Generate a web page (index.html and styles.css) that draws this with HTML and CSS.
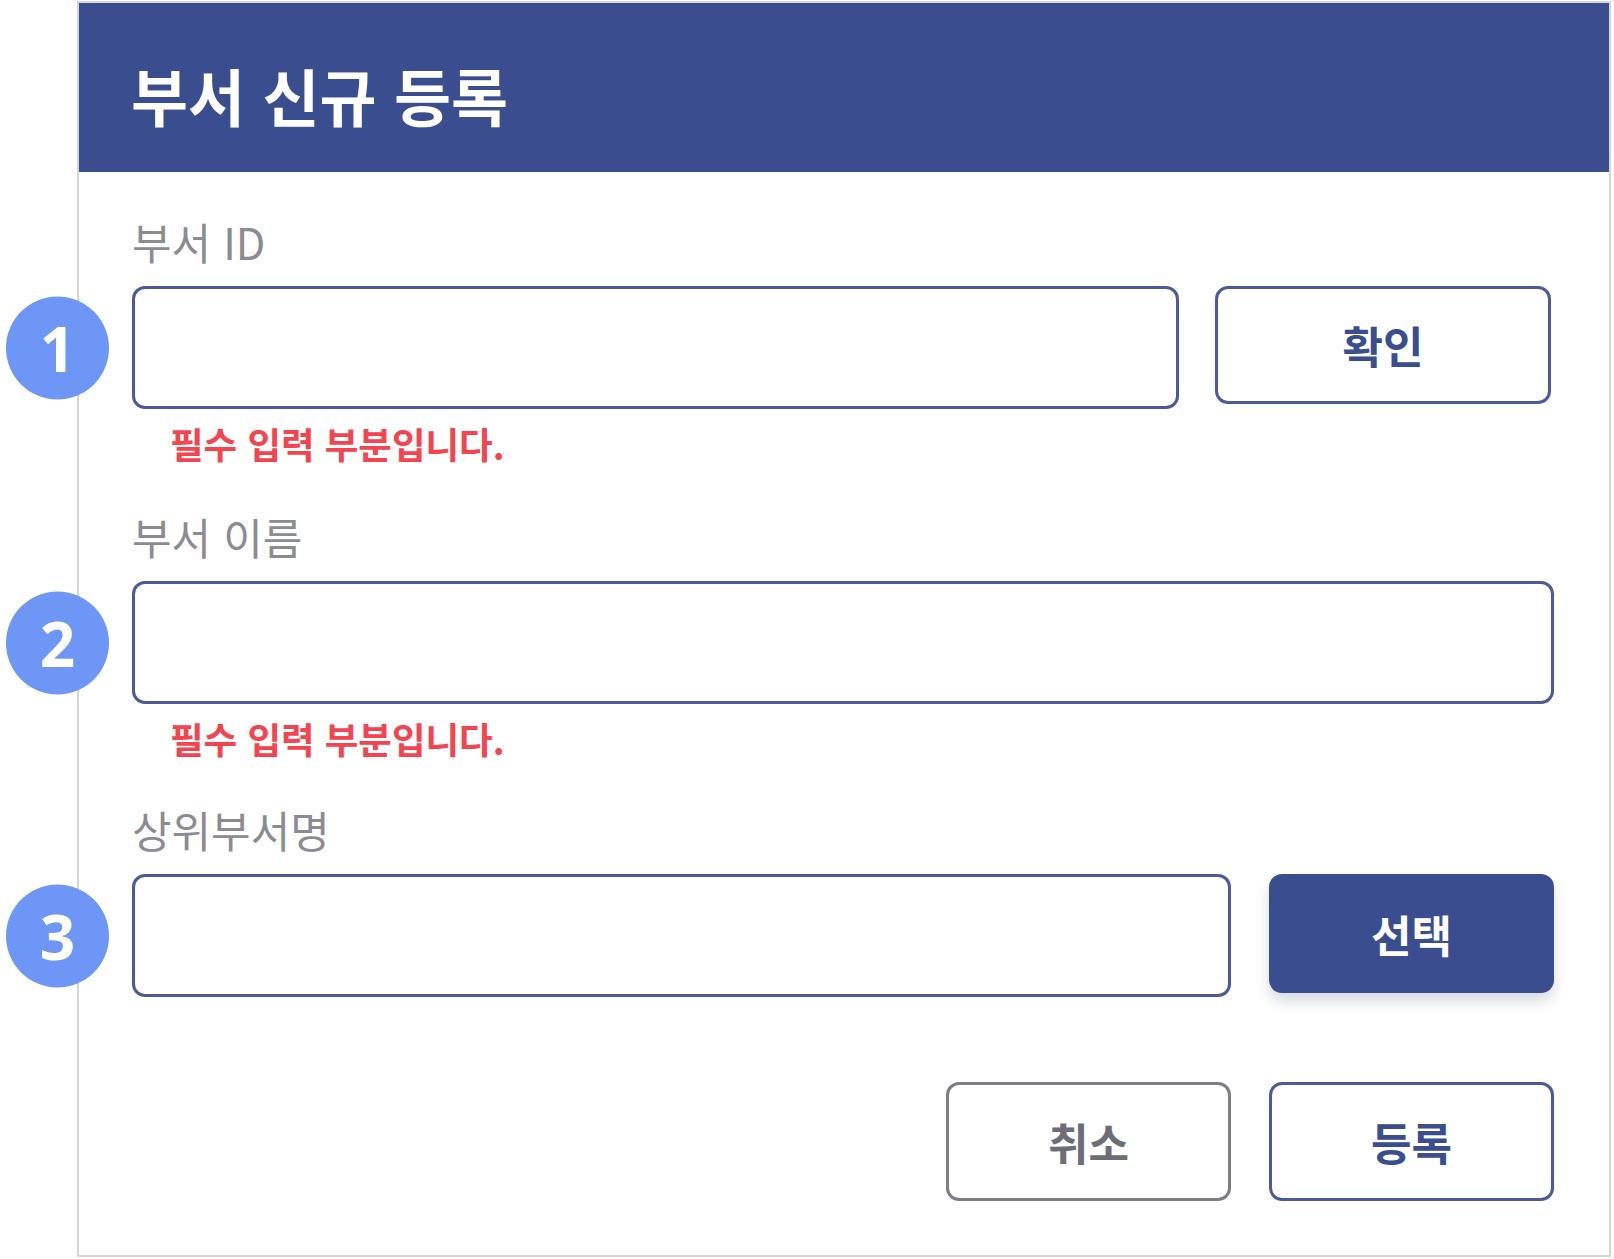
FILE: index.html
```html
<!DOCTYPE html>
<html lang="ko">
<head>
<meta charset="utf-8">
<title>부서 신규 등록</title>
<link rel="stylesheet" href="styles.css">
</head>
<body>
<div class="dialog">
  <div class="dialog-header">
    <h1 class="dialog-title">부서 신규 등록</h1>
  </div>
  <div class="dialog-body">
    <div class="field">
      <div class="field-label">부서 ID</div>
      <div class="field-row row-id">
        <span class="step">1</span>
        <div class="input"></div>
        <button class="btn btn-outline">확인</button>
      </div>
      <div class="field-error">필수 입력 부분입니다.</div>
    </div>
    <div class="field">
      <div class="field-label">부서 이름</div>
      <div class="field-row row-full">
        <span class="step">2</span>
        <div class="input"></div>
      </div>
      <div class="field-error">필수 입력 부분입니다.</div>
    </div>
    <div class="field field-last">
      <div class="field-label">상위부서명</div>
      <div class="field-row row-select">
        <span class="step">3</span>
        <div class="input"></div>
        <button class="btn btn-primary">선택</button>
      </div>
    </div>
    <div class="actions">
      <button class="btn btn-cancel">취소</button>
      <button class="btn btn-outline">등록</button>
    </div>
  </div>
</div>
</body>
</html>
```

FILE: styles.css
```css
html, body {
  margin: 0;
  padding: 0;
  background: #ffffff;
}

body {
  font-family: "Noto Sans CJK KR", "Noto Sans", sans-serif;
}

.dialog {
  box-sizing: border-box;
  width: 1534px;
  margin: 1px 0 0 77px;
  border: 2px solid #d6d6d6;
  background: #ffffff;
}

.dialog-header {
  box-sizing: border-box;
  height: 169px;
  background: #3a4d8f;
  padding: 14px 0 0 52px;
  display: flex;
  align-items: center;
}

.dialog-title {
  margin: 0;
  color: #ffffff;
  font-size: 62px;
  font-weight: 700;
  line-height: 1;
}

.dialog-body {
  padding: 44px 55px 54px 53px;
}

.field + .field {
  margin-top: 44px;
}

.field + .field-last {
  margin-top: 42px;
}

.field-label {
  font-size: 43px;
  line-height: 50px;
  color: #8b8b92;
  margin-bottom: 20px;
}

.field-row {
  position: relative;
  display: grid;
  height: 123px;
}

.row-id {
  grid-template-columns: 1047px 336px;
  column-gap: 36px;
  align-items: start;
}

.row-full {
  grid-template-columns: 1fr;
}

.row-select {
  grid-template-columns: 1099px 285px;
  column-gap: 38px;
  align-items: start;
}

.input {
  box-sizing: border-box;
  height: 123px;
  border: 3px solid #4a5a9c;
  border-radius: 13px;
  background: #ffffff;
}

.step {
  position: absolute;
  left: -126px;
  top: 50%;
  transform: translateY(-50%);
  width: 103px;
  height: 103px;
  border-radius: 50%;
  background: #6e96f6;
  color: #ffffff;
  font-family: "Noto Sans", "Open Sans", sans-serif;
  font-weight: 700;
  font-size: 62px;
  line-height: 103px;
  text-align: center;
}

.field-error {
  margin-top: 12px;
  padding-left: 38px;
  font-size: 36.5px;
  line-height: 46px;
  font-weight: 700;
  color: #f3444f;
}

.btn {
  box-sizing: border-box;
  font-family: "Noto Sans CJK KR", "Noto Sans", sans-serif;
  font-size: 44px;
  font-weight: 700;
  border-radius: 13px;
  background: #ffffff;
  padding: 0;
  cursor: pointer;
}

.row-id .btn {
  height: 118px;
}

.btn-outline {
  border: 3px solid #4a5a9c;
  color: #3a4d8f;
}

.btn-primary {
  height: 119px;
  border: none;
  background: #3a4d8f;
  color: #ffffff;
  box-shadow: 0 8px 14px rgba(40, 50, 90, 0.18);
}

.btn-cancel {
  border: 3px solid #7d7d86;
  color: #6d6d76;
}

.actions {
  margin-top: 85px;
  display: flex;
  justify-content: flex-end;
  gap: 38px;
}

.actions .btn {
  width: 285px;
  height: 119px;
}
```
